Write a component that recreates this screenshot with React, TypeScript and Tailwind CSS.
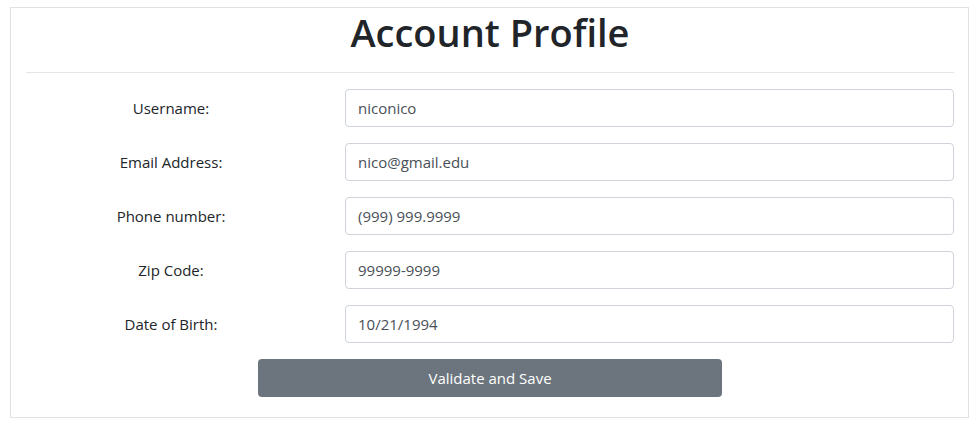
import React from 'react';

const fields = [
  { label: 'Username:', value: 'niconico' },
  { label: 'Email Address:', value: 'nico@gmail.edu' },
  { label: 'Phone number:', value: '(999) 999.9999' },
  { label: 'Zip Code:', value: '99999-9999' },
  { label: 'Date of Birth:', value: '10/21/1994' },
];

const App: React.FC = () => {
  return (
    <div className="min-h-screen bg-white pt-[7px] pl-[10px] pr-[2px] font-['Open_Sans',sans-serif] text-[#212529]">
      <div className="border border-[#dee2e6] pl-[15px] pr-[14px] pb-[20px]">
        <h1 className="h-[48px] flex items-center justify-center text-[38px] font-semibold leading-none">
          Account Profile
        </h1>
        <hr className="my-4 border-t border-[#e5e5e5]" />
        <form className="grid grid-cols-[290px_1fr] gap-x-[29px] gap-y-4">
          {fields.map(field => (
            <React.Fragment key={field.label}>
              <label className="flex items-center justify-center text-[15px]">
                {field.label}
              </label>
              <input
                type="text"
                defaultValue={field.value}
                className="h-[38px] w-full rounded border border-[#ced4da] px-3 text-[15px] text-[#495057] outline-none"
              />
            </React.Fragment>
          ))}
        </form>
        <button
          type="button"
          className="mx-auto mt-4 block h-[38px] w-[464px] rounded bg-[#6c757d] text-[15px] text-white"
        >
          Validate and Save
        </button>
      </div>
    </div>
  );
};

export default App;
